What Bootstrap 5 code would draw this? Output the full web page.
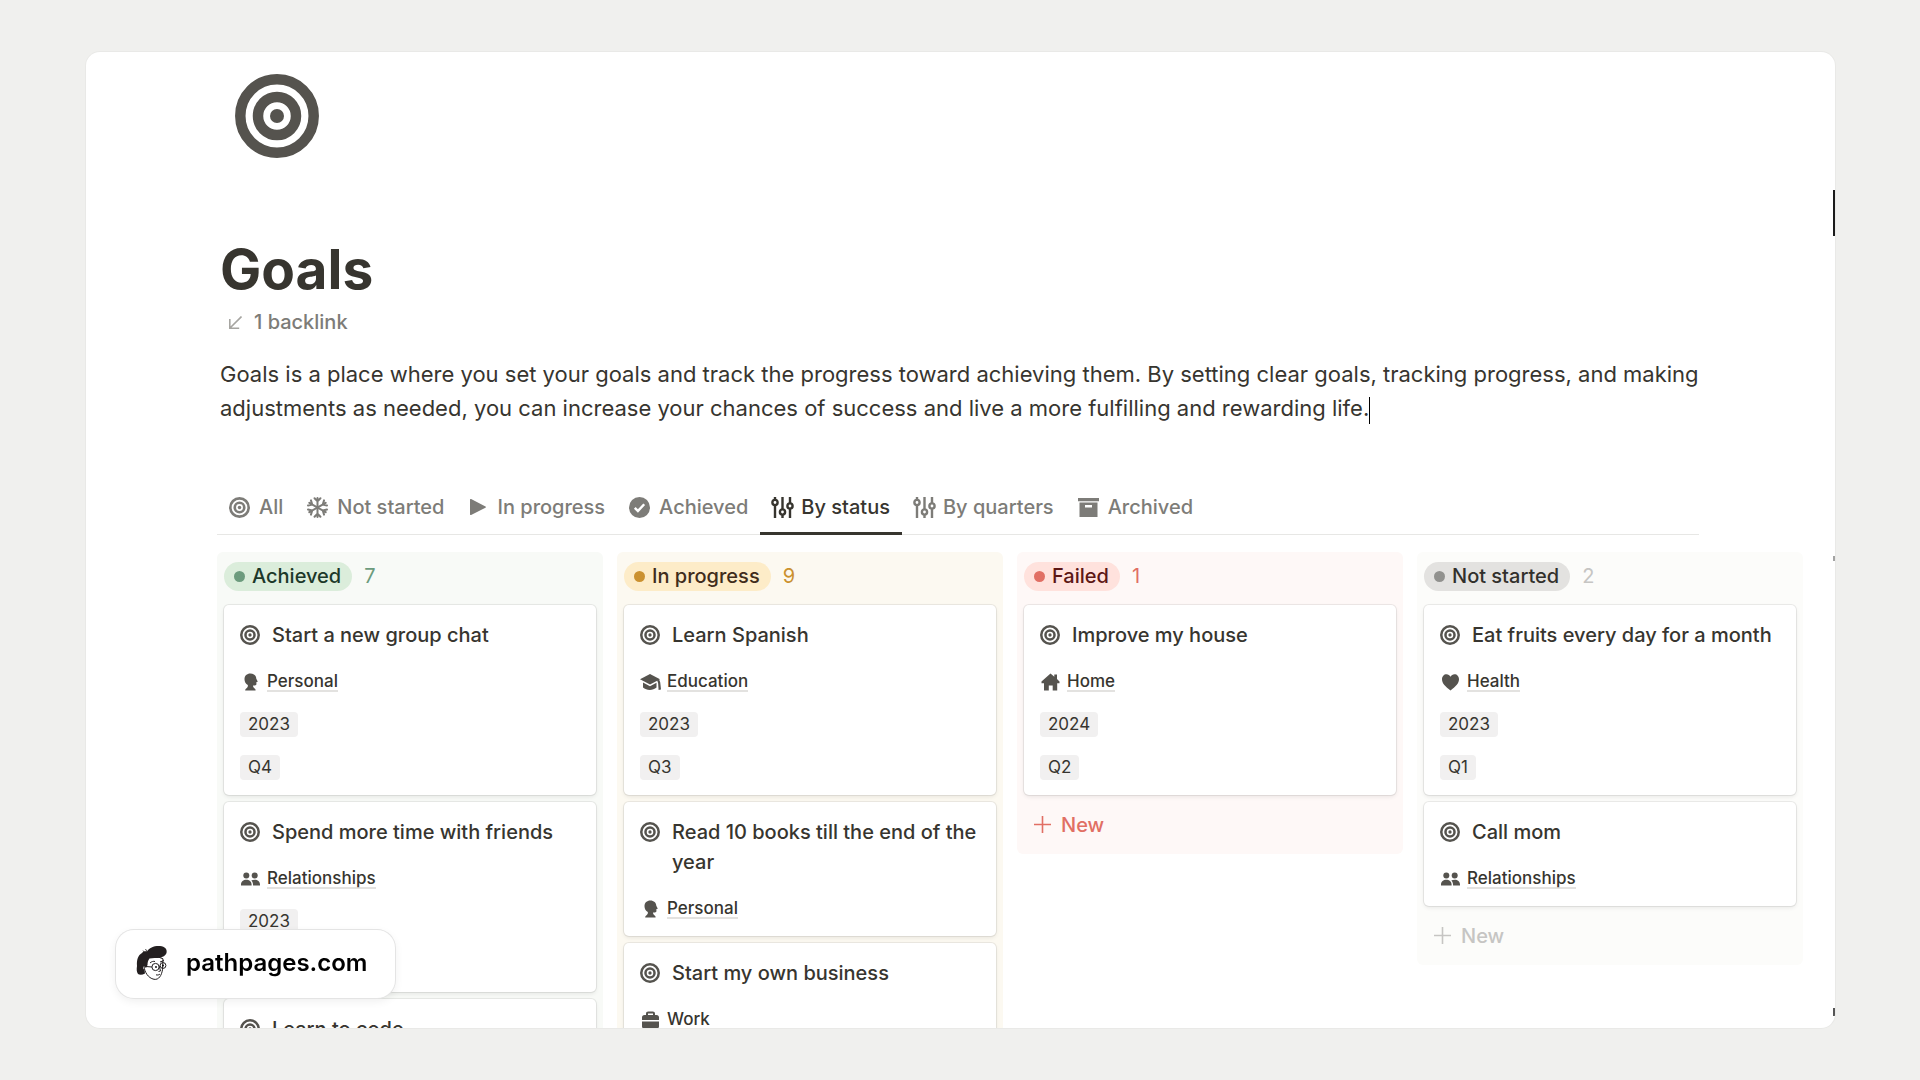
<!DOCTYPE html>
<html lang="en">
<head>
<meta charset="utf-8">
<meta name="viewport" content="width=device-width, initial-scale=1">
<title>Goals</title>
<link href="https://cdn.jsdelivr.net/npm/bootstrap@5.3.0/dist/css/bootstrap.min.css" rel="stylesheet">
<style>
  :root { --ink: #37352f; --muted-ink: #7d7c78; --glyph: #55534e; }
  body { background: #f0f0ee; color: var(--ink); font-family: Inter, "Liberation Sans", sans-serif; }
  .stage { height: 100vh; padding: 52px 85px 52px 86px; }
  .page-panel { height: 100%; background: #fff; border-radius: 14px; box-shadow: 0 0 0 1px #e9e9e7; overflow: hidden; padding-left: 131px; }
  .page-head { margin-right: 136px; }
  .page-icon { margin: 22px 0 0 18px; color: var(--glyph); }
  .page-title { margin: 75px 0 0 3px; font-size: 55px; line-height: 72px; font-weight: 700; }
  .backlink { width: fit-content; margin: 2px 0 0 12px; gap: 12px; font-size: 20px; line-height: 30px; font-weight: 500; color: var(--muted-ink); text-decoration: none; }
  .backlink svg { color: #a6a5a1; }
  .intro { margin: 20px 0 0 3px; font-size: 22px; line-height: 34px; }
  .caret { display: inline-block; width: 1px; height: 27px; margin-bottom: -2px; background: #000; vertical-align: -6px; }
  .view-tabs { margin-top: 56px; border-bottom: 1px solid #e7e7e5; flex-wrap: nowrap; }
  .view-tabs .nav-link { display: flex; align-items: center; gap: 9px; height: 54px; padding: 1px 12px 0; margin-bottom: -1px; color: var(--muted-ink); font-size: 20px; font-weight: 500; border-bottom: 3px solid transparent; white-space: nowrap; }
  .view-tabs .nav-link.tight { gap: 7px; padding-left: 11px; }
  .view-tabs .nav-link.active { color: var(--ink); border-color: var(--ink); }
  .board { margin: 17px 32px 0 0; gap: 14px; }
  .lane { flex: 1 1 0; min-width: 0; padding: 10px 7px 0; border-radius: 6px; }
  .lane-head { gap: 12px; margin-bottom: 14px; font-size: 20px; line-height: 29px; font-weight: 500; }
  .lane-pill { gap: 7px; padding: 0 11px 0 10px; border-radius: 15px; }
  .lane-dot { width: 11px; height: 11px; border-radius: 50%; }
  .lane-count { font-weight: 400; }
  .goal { background: #fff; border-radius: 5px; box-shadow: 0 0 0 1px rgba(15,15,15,.07), 0 2px 4px rgba(15,15,15,.08); padding: 15px 16px 6px; margin-bottom: 7px; }
  .goal-title { display: flex; gap: 12px; margin: 0 0 10px; font-size: 20px; line-height: 30px; font-weight: 500; }
  .goal-title svg { flex: none; margin-top: 5px; color: var(--glyph); }
  .prop { height: 43px; gap: 6px; font-size: 17px; line-height: 25px; }
  .prop svg { color: var(--glyph); }
  .prop a { color: var(--ink); font-weight: 500; text-decoration: none; line-height: 18px; border-bottom: 2px solid #e3e2e0; }
  .tag { padding: 0 8px; border-radius: 4px; background: #f1f0f0; }
  .add { display: flex; align-items: center; gap: 10px; height: 59px; margin-top: -7px; padding: 0 10px; border: 0; background: none; font-size: 20px; font-weight: 500; }
  .lane-green { background: #f8faf7; }
  .lane-green .lane-pill { background: #dbeddb; color: #1c3829; }
  .lane-green .lane-dot { background: #6c9b7d; }
  .lane-green .lane-count { color: #6c9b7d; }
  .lane-yellow { background: #fcf9f1; }
  .lane-yellow .lane-pill { background: #fdecc8; color: #402c1b; }
  .lane-yellow .lane-dot { background: #cb912f; }
  .lane-yellow .lane-count { color: #cb912f; }
  .lane-red { background: #fef8f7; }
  .lane-red .lane-pill { background: #ffe2dd; color: #5d1715; }
  .lane-red .lane-dot { background: #e16f64; }
  .lane-red .lane-count, .lane-red .add { color: #e16f64; }
  .lane-gray { background: #fcfcfa; }
  .lane-gray .lane-pill { background: #e3e2e0; color: #32302c; }
  .lane-gray .lane-dot { background: #91918e; }
  .lane-gray .lane-count, .lane-gray .add { color: #c6c5c3; }
  .edge-mark { position: absolute; right: 0; width: 2px; background: #1b1b1b; }
  .edge-cover { top: 138px; height: 46px; }
  .edge-menu { top: 504px; height: 5px; background: #a3a3a3; }
  .edge-help { bottom: 12px; height: 8px; background: #555; }
  .site-badge { position: fixed; left: 116px; bottom: 82px; display: flex; align-items: center; gap: 18px; height: 68px; padding: 0 28px 3px 20px; background: #fff; border-radius: 18px; box-shadow: 0 0 0 1px #e4e4e4, 0 3px 10px rgba(0,0,0,.07); color: #000; font-size: 24px; font-weight: 600; text-decoration: none; }
</style>
</head>
<body>
<svg class="d-none" xmlns="http://www.w3.org/2000/svg">
  <symbol id="target" viewBox="0 0 84 84"><g fill="none" stroke="currentColor" stroke-width="10.5"><circle cx="42" cy="42" r="36.7"/><circle cx="42" cy="42" r="19"/></g><circle cx="42" cy="42" r="7" fill="currentColor"/></symbol>
  <symbol id="snow" viewBox="0 0 20 20"><g fill="none" stroke="currentColor" stroke-width="1.9" stroke-linecap="round"><g id="arm"><path d="M10 1v18M7.2 1.2 10 4.2l2.8-3M7.2 18.8 10 15.8l2.8 3"/></g><use href="#arm" transform="rotate(60 10 10)"/><use href="#arm" transform="rotate(120 10 10)"/></g></symbol>
  <symbol id="play" viewBox="0 0 16 16"><path fill="currentColor" d="M0 .8v14.400c0 .7.500 1 1.100.7l14.400-7.200c.6-.3.600-1 0-1.300L1.100.1C.5-.2 0 .1 0 .8z"/></symbol>
  <symbol id="check" viewBox="0 0 20 20"><circle cx="10" cy="10" r="10" fill="currentColor"/><path d="m5.500 10.300 3 3 6-6.400" fill="none" stroke="#fff" stroke-width="2.300"/></symbol>
  <symbol id="sliders" viewBox="0 0 23 21"><g fill="none" stroke="currentColor" stroke-width="2.400"><path d="M4 0v3M4 8v13M11.500 0v12M11.500 17.500V21M19 0v6.500M19 12v9"/><circle cx="4" cy="5.500" r="2.600"/><circle cx="11.500" cy="15" r="2.600"/><circle cx="19" cy="9" r="2.600"/></g></symbol>
  <symbol id="archive" viewBox="0 0 21 20"><path fill="currentColor" fill-rule="evenodd" d="M0 1h21v3.200H0zM1.500 5.500h18v14.500h-18zM7 8v2.500h7V8z"/></symbol>
  <symbol id="person" viewBox="0 0 20 20"><path fill="currentColor" d="M9.800 1.500c3.600 0 6 2.300 6 5.300l1.300 2.400c.2.400 0 .6-.4.700l-.8.200v2c0 1-.6 1.400-1.500 1.400h-1.900c0 1.500.8 2.300 1.700 3 .7.600.9 1 .9 2H4.700c0-1.200.4-1.700 1.300-2.300 1.100-.8 1.600-1.800 1.300-3.200C5.300 11.900 4 9.800 4 7.200 4 3.700 6.500 1.500 9.800 1.500z"/></symbol>
  <symbol id="people" viewBox="0 0 20 20"><g fill="currentColor"><circle cx="5.800" cy="6.500" r="3"/><circle cx="14.200" cy="6.500" r="3"/><path d="M.5 16.500v-1c0-3 2.400-4.800 5.300-4.800s5.300 1.800 5.300 4.800v1zM12.600 16.500c0-2.400-.4-3.800-1.800-5.100 1-.5 2.200-.7 3.400-.7 3 0 5.300 1.800 5.300 4.800v1z"/></g></symbol>
  <symbol id="cap" viewBox="0 0 21 20"><g fill="currentColor"><path d="M0 7.300 10 2l10 5.300-10 5.300z"/><path d="M3 10.500 10 14.200l6.500-3.500v4.800c-3.500 3.300-10 3.300-13.500 0z"/><path d="M17 8l2-.8 1.200 3 .8 7.300-2.400.5-.5-7z"/></g></symbol>
  <symbol id="house" viewBox="0 0 20 20"><path fill="currentColor" d="m10 1.500 3.800 3.300V2.500h2.700v4.600L19 9.500v1.700h-2.300V18.500h-4.500v-5H8.300v5H3.500v-7.300H1V9.500z"/></symbol>
  <symbol id="heart" viewBox="0 0 20 20"><path fill="currentColor" d="M10 18.500C5 14.700 1.500 11.500 1.500 7.300c0-3 2-5.100 4.500-5.100 1.700 0 3.200 1 4 2.600.8-1.600 2.300-2.600 4-2.600 2.500 0 4.500 2.100 4.500 5.100 0 4.200-3.500 7.400-8.500 11.200z"/></symbol>
  <symbol id="case" viewBox="0 0 20 20"><path fill="currentColor" fill-rule="evenodd" d="M5.500 5V3.700C5.500 2.300 6.400 1.500 7.700 1.500h4.600c1.300 0 2.200.8 2.200 2.200V5h1.500c1.700 0 2.500.9 2.500 2.500V10h-17V7.500C1.500 5.900 2.300 5 4 5zm2 0h5V3.500h-5zM1.500 11.500h17v5c0 1.200-.8 2-2 2h-13c-1.200 0-2-.8-2-2z"/></symbol>
  <symbol id="plus" viewBox="0 0 17 17"><path d="M8.500 0v17M0 8.500h17" stroke="currentColor" stroke-width="1.600"/></symbol>
</svg>

<main class="stage">
  <div class="page-panel position-relative">
    <span class="edge-mark edge-cover"></span>
    <span class="edge-mark edge-menu"></span>
    <span class="edge-mark edge-help"></span>
    <header class="page-head">
      <svg class="page-icon d-block" width="84" height="84" aria-hidden="true"><use href="#target"/></svg>
      <h1 class="page-title">Goals</h1>
      <a class="backlink d-flex align-items-center" href="#"><svg width="13" height="13" viewBox="0 0 13 13" fill="none" stroke="currentColor" stroke-width="1.600" aria-hidden="true"><path d="M12.500.5 1 12M.8 3v9.200h9.400"/></svg>1 backlink</a>
      <p class="intro">Goals is a place where you set your goals and track the progress toward achieving them. By setting clear goals, tracking progress, and making adjustments as needed, you can increase your chances of success and live a more fulfilling and rewarding life.<span class="caret"></span></p>
      <nav class="view-tabs nav">
        <a class="nav-link" href="#"><svg width="21" height="21"><use href="#target"/></svg>All</a>
        <a class="nav-link" href="#"><svg width="21" height="21"><use href="#snow"/></svg>Not started</a>
        <a class="nav-link" href="#"><svg width="20" height="16"><use href="#play"/></svg>In progress</a>
        <a class="nav-link" href="#"><svg width="21" height="21"><use href="#check"/></svg>Achieved</a>
        <a class="nav-link tight active" aria-current="page" href="#"><svg width="23" height="21"><use href="#sliders"/></svg>By status</a>
        <a class="nav-link tight" href="#"><svg width="23" height="21"><use href="#sliders"/></svg>By quarters</a>
        <a class="nav-link" href="#"><svg width="21" height="20"><use href="#archive"/></svg>Archived</a>
      </nav>
    </header>

    <div class="board d-flex align-items-start">
      <section class="lane lane-green">
        <div class="lane-head d-flex"><span class="lane-pill d-flex align-items-center"><span class="lane-dot"></span>Achieved</span><span class="lane-count">7</span></div>
        <article class="goal">
          <h2 class="goal-title"><svg width="20" height="20"><use href="#target"/></svg>Start a new group chat</h2>
          <div class="prop d-flex align-items-center"><svg width="21" height="20"><use href="#person"/></svg><a href="#">Personal</a></div>
          <div class="prop d-flex align-items-center"><span class="tag">2023</span></div>
          <div class="prop d-flex align-items-center"><span class="tag">Q4</span></div>
        </article>
        <article class="goal">
          <h2 class="goal-title"><svg width="20" height="20"><use href="#target"/></svg>Spend more time with friends</h2>
          <div class="prop d-flex align-items-center"><svg width="21" height="20"><use href="#people"/></svg><a href="#">Relationships</a></div>
          <div class="prop d-flex align-items-center"><span class="tag">2023</span></div>
          <div class="prop d-flex align-items-center"></div>
        </article>
        <article class="goal">
          <h2 class="goal-title"><svg width="20" height="20"><use href="#target"/></svg>Learn to code</h2>
        </article>
      </section>

      <section class="lane lane-yellow">
        <div class="lane-head d-flex"><span class="lane-pill d-flex align-items-center"><span class="lane-dot"></span>In progress</span><span class="lane-count">9</span></div>
        <article class="goal">
          <h2 class="goal-title"><svg width="20" height="20"><use href="#target"/></svg>Learn Spanish</h2>
          <div class="prop d-flex align-items-center"><svg width="21" height="20"><use href="#cap"/></svg><a href="#">Education</a></div>
          <div class="prop d-flex align-items-center"><span class="tag">2023</span></div>
          <div class="prop d-flex align-items-center"><span class="tag">Q3</span></div>
        </article>
        <article class="goal">
          <h2 class="goal-title"><svg width="20" height="20"><use href="#target"/></svg>Read 10 books till the end of the year</h2>
          <div class="prop d-flex align-items-center"><svg width="21" height="20"><use href="#person"/></svg><a href="#">Personal</a></div>
        </article>
        <article class="goal">
          <h2 class="goal-title"><svg width="20" height="20"><use href="#target"/></svg>Start my own business</h2>
          <div class="prop d-flex align-items-center"><svg width="21" height="20"><use href="#case"/></svg><a href="#">Work</a></div>
        </article>
      </section>

      <section class="lane lane-red">
        <div class="lane-head d-flex"><span class="lane-pill d-flex align-items-center"><span class="lane-dot"></span>Failed</span><span class="lane-count">1</span></div>
        <article class="goal">
          <h2 class="goal-title"><svg width="20" height="20"><use href="#target"/></svg>Improve my house</h2>
          <div class="prop d-flex align-items-center"><svg width="21" height="20"><use href="#house"/></svg><a href="#">Home</a></div>
          <div class="prop d-flex align-items-center"><span class="tag">2024</span></div>
          <div class="prop d-flex align-items-center"><span class="tag">Q2</span></div>
        </article>
        <button class="add" type="button"><svg width="17" height="17"><use href="#plus"/></svg>New</button>
      </section>

      <section class="lane lane-gray">
        <div class="lane-head d-flex"><span class="lane-pill d-flex align-items-center"><span class="lane-dot"></span>Not started</span><span class="lane-count">2</span></div>
        <article class="goal">
          <h2 class="goal-title"><svg width="20" height="20"><use href="#target"/></svg>Eat fruits every day for a month</h2>
          <div class="prop d-flex align-items-center"><svg width="21" height="20"><use href="#heart"/></svg><a href="#">Health</a></div>
          <div class="prop d-flex align-items-center"><span class="tag">2023</span></div>
          <div class="prop d-flex align-items-center"><span class="tag">Q1</span></div>
        </article>
        <article class="goal">
          <h2 class="goal-title"><svg width="20" height="20"><use href="#target"/></svg>Call mom</h2>
          <div class="prop d-flex align-items-center"><svg width="21" height="20"><use href="#people"/></svg><a href="#">Relationships</a></div>
        </article>
        <button class="add" type="button"><svg width="17" height="17"><use href="#plus"/></svg>New</button>
      </section>
    </div>
  </div>
</main>

<a class="site-badge" href="#">
  <svg width="32" height="36" viewBox="0 0 32 36" aria-hidden="true">
    <path d="M8 21c.5 6 4 12 10 13.300 5 .8 7.500-4 8.500-9.500l.5-11-8-3-9 2z" fill="#fff" stroke="#231f20"/>
    <path d="M2 29C.5 27 .5 24 1 21 .5 15 2 10 6 8c1-1.500 3-2 5-1.500C13 2.500 19 .5 24 1c5 .3 7.500 3.500 6.500 7-1.500 4-7 5.500-12 5l-5 .5c-1.500 2-2 4-2 6.500l-1.500 3L8 21c-1.500 1-1 3 .5 4l.5 3.500c-2.500 1.500-5.500 1.500-7 .5z" fill="#231f20"/>
    <g fill="none" stroke="#231f20"><path d="M10 21.500l6 .5"/><circle cx="19.500" cy="22" r="3.600"/><circle cx="27" cy="20.500" r="2.900"/><path d="M23 21.500l1.200-.5M14 18c1.500-1.500 3.500-2 5-1.500M24 17l4-1.500M23.500 22l1 4-2 .5M20 29.800c1.500.5 3 .2 4-.8"/></g>
    <path d="M7 5.500 9.500 9M9.500 4l2 3.500" fill="none" stroke="#231f20" stroke-width=".8"/>
    <circle cx="20" cy="22" r=".9"/><circle cx="27" cy="20.500" r=".9"/>
  </svg>
  pathpages.com
</a>
<script src="https://cdn.jsdelivr.net/npm/bootstrap@5.3.0/dist/js/bootstrap.bundle.min.js"></script>
</body>
</html>
